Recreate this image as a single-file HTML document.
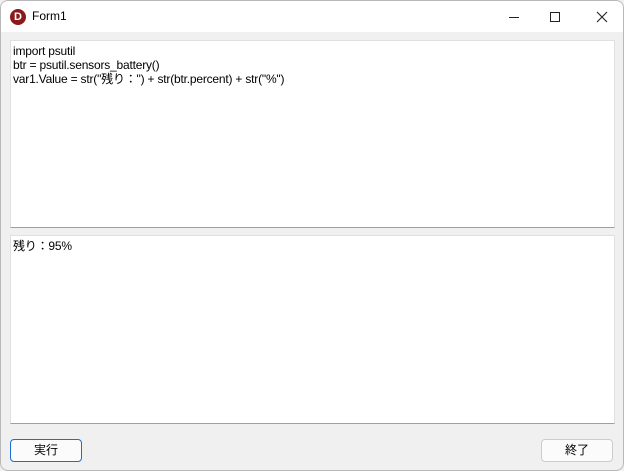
<!DOCTYPE html>
<html><head><meta charset="utf-8"><style>
*{margin:0;padding:0;box-sizing:border-box}
body{width:624px;height:471px;background:#f0f0f0;font-family:"Liberation Sans","Noto Sans CJK JP",sans-serif;font-size:12px;color:#000;position:relative;overflow:hidden}
.win{position:absolute;left:0;top:0;width:624px;height:471px;border:1px solid #b8b8b8;border-radius:8px;background:#f0f0f0;overflow:hidden}
.title{position:absolute;left:0;top:0;width:622px;height:31px;background:#fff}
.logo{position:absolute;left:9px;top:8px;width:16px;height:16px;border-radius:50%;background:#8b1a1a;color:#fff;font-weight:bold;font-size:11px;text-align:center;line-height:16px}
.tt{position:absolute;left:31px;top:8px;font-size:12px}
.memo{position:absolute;left:9px;width:605px;background:#fff;border:1px solid #e0e0e0;border-bottom:1px solid #a0a0a0;padding:3px 2px;line-height:14px;font-size:12px;letter-spacing:-0.2px}
.btn{position:absolute;top:438px;height:23px;width:72px;border:1px solid #ccc;border-radius:4px;background:#fbfbfb;text-align:center;line-height:21px;font-size:12px}
</style></head><body>
<div class="win">
<div class="title">
<div class="logo">D</div><div class="tt">Form1</div>
<svg style="position:absolute;left:500px;top:8px" width="120" height="16">
<line x1="8" y1="8.5" x2="18" y2="8.5" stroke="#222" stroke-width="1"/>
<rect x="49.5" y="3.5" width="9" height="9" fill="none" stroke="#222"/>
<path d="M96 3 L106 13 M106 3 L96 13" stroke="#222" stroke-width="1.1"/>
</svg>
</div>
<div class="memo" style="top:39px;height:188px">import psutil<br>btr = psutil.sensors_battery()<br>var1.Value = str("残り：") + str(btr.percent) + str("%")</div>
<div class="memo" style="top:234px;height:189px">残り：95%</div>
<div class="btn" style="left:9px;border-color:#1a6fd0">実行</div>
<div class="btn" style="left:540px">終了</div>
</div>
</body></html>
